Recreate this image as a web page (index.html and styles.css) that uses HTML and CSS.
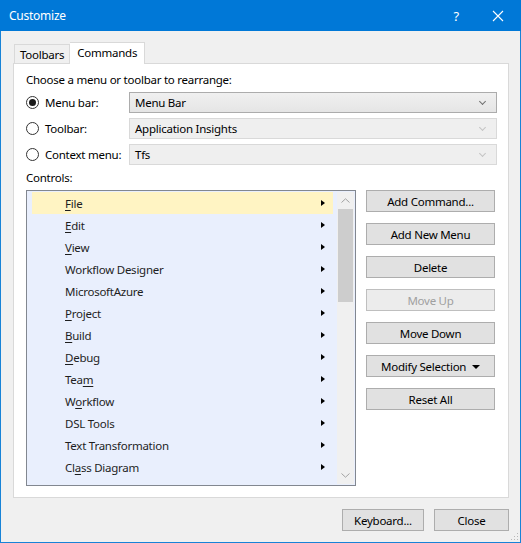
FILE: index.html
```html
<!DOCTYPE html>
<html lang="en">
<head>
  <meta charset="UTF-8">
  <title>Customize</title>
  <link rel="stylesheet" href="styles.css">
</head>
<body>
  <div class="window">
    <div class="titlebar">
      <span class="title">Customize</span>
      <span class="help">?</span>
      <svg class="close-x" width="12" height="12" viewBox="0 0 12 12">
        <path d="M1 1 L11 11 M11 1 L1 11" stroke="#fff" stroke-width="1.1"/>
      </svg>
    </div>

    <div class="content">
      <div class="tabs">
        <div class="tab">Toolbars</div>
        <div class="tab active">Commands</div>
      </div>

      <div class="panel">
        <div class="label">Choose a menu or toolbar to rearrange:</div>

        <div class="choice">
          <span class="radio checked"></span>
          <span class="choice-label">Menu bar:</span>
          <div class="combo">Menu Bar<span class="chev"></span></div>
        </div>
        <div class="choice">
          <span class="radio"></span>
          <span class="choice-label">Toolbar:</span>
          <div class="combo disabled">Application Insights<span class="chev"></span></div>
        </div>
        <div class="choice">
          <span class="radio"></span>
          <span class="choice-label">Context menu:</span>
          <div class="combo disabled">Tfs<span class="chev"></span></div>
        </div>

        <div class="label controls">Controls:</div>

        <div class="controls-row">
          <div class="listbox">
            <div class="items">
              <div class="item selected"><span><u>F</u>ile</span><i class="arrow"></i></div>
              <div class="item"><span><u>E</u>dit</span><i class="arrow"></i></div>
              <div class="item"><span><u>V</u>iew</span><i class="arrow"></i></div>
              <div class="item"><span>Workflow Designer</span><i class="arrow"></i></div>
              <div class="item"><span>MicrosoftAzure</span><i class="arrow"></i></div>
              <div class="item"><span><u>P</u>roject</span><i class="arrow"></i></div>
              <div class="item"><span><u>B</u>uild</span><i class="arrow"></i></div>
              <div class="item"><span><u>D</u>ebug</span><i class="arrow"></i></div>
              <div class="item"><span>Tea<u>m</u></span><i class="arrow"></i></div>
              <div class="item"><span>W<u>o</u>rkflow</span><i class="arrow"></i></div>
              <div class="item"><span>DSL Tools</span><i class="arrow"></i></div>
              <div class="item"><span>Text Transformation</span><i class="arrow"></i></div>
              <div class="item"><span>Cl<u>a</u>ss Diagram</span><i class="arrow"></i></div>
            </div>
            <div class="scrollbar">
              <div class="sb-btn"><svg width="9" height="5" viewBox="0 0 9 5"><path d="M0.5 4.5 L4.5 0.8 L8.5 4.5" fill="none" stroke="#a3a3a3"/></svg></div>
              <div class="sb-track"><div class="sb-thumb"></div></div>
              <div class="sb-btn"><svg width="9" height="5" viewBox="0 0 9 5"><path d="M0.5 0.5 L4.5 4.2 L8.5 0.5" fill="none" stroke="#a3a3a3"/></svg></div>
            </div>
          </div>

          <div class="actions">
            <button class="btn">Add Command...</button>
            <button class="btn">Add New Menu</button>
            <button class="btn">Delete</button>
            <button class="btn" disabled>Move Up</button>
            <button class="btn">Move Down</button>
            <button class="btn">Modify Selection <i class="drop"></i></button>
            <button class="btn">Reset All</button>
          </div>
        </div>
      </div>

      <div class="footer">
        <button class="btn keyboard">Keyboard...</button>
        <button class="btn close">Close</button>
      </div>
    </div>

    <svg class="grip" width="9" height="9" viewBox="0 0 9 9">
      <g fill="#b8b8b8">
        <rect x="7" y="1" width="1" height="1"/>
        <rect x="4" y="4" width="1" height="1"/><rect x="7" y="4" width="1" height="1"/>
        <rect x="1" y="7" width="1" height="1"/><rect x="4" y="7" width="1" height="1"/><rect x="7" y="7" width="1" height="1"/>
      </g>
    </svg>
  </div>
</body>
</html>
```

FILE: styles.css
```css
body {
  margin: 0;
  font-family: "Noto Sans", "Open Sans", sans-serif;
  font-size: 11.5px;
  letter-spacing: -0.25px;
  color: #000;
}
.window {
  position: relative;
  width: 521px;
  height: 543px;
  box-sizing: border-box;
  background-color: #f0f0f0;
  border: 1px solid #1883d7;
  border-top: none;
}
.titlebar {
  height: 31px;
  margin: 0 -1px;
  background-color: #0078d7;
  color: #fff;
  display: flex;
  align-items: center;
  padding-left: 9px;
}
.title {
  flex: 1;
  font-size: 12px;
}
.help {
  font-size: 13px;
  margin-right: 33px;
}
.close-x {
  margin-right: 17px;
}
.content {
  padding: 11px 11px 0 12px;
}
.tabs {
  display: flex;
  align-items: flex-end;
  height: 21px;
  margin-left: 1px;
  position: relative;
  z-index: 1;
}
.tab {
  height: 19px;
  box-sizing: border-box;
  padding: 1px 5px 0 5px;
  border: 1px solid #d9d9d9;
  border-bottom: none;
  background-color: #f0f0f0;
  line-height: 17px;
}
.tab.active {
  height: 22px;
  margin-bottom: -1px;
  background-color: #fff;
  padding: 0 7px;
  line-height: 20px;
  border-left: none;
}
.panel {
  height: 435px;
  box-sizing: border-box;
  border: 1px solid #d9d9d9;
  background-color: #fff;
  padding: 8px 11px 0 12px;
}
.label {
  height: 16px;
  line-height: 16px;
}
.choice {
  display: flex;
  align-items: center;
  height: 21px;
  margin-top: 4px;
}
.choice + .choice {
  margin-top: 5px;
}
.radio {
  width: 13px;
  height: 13px;
  box-sizing: border-box;
  border: 1px solid #333;
  border-radius: 50%;
  margin: 0 6px 0 0;
  display: flex;
  align-items: center;
  justify-content: center;
}
.radio.checked::after {
  content: "";
  width: 7px;
  height: 7px;
  border-radius: 50%;
  background-color: #1a1a1a;
}
.choice-label {
  width: 84px;
}
.combo {
  flex: 1;
  height: 21px;
  box-sizing: border-box;
  border: 1px solid #acacac;
  background: linear-gradient(#f0f0f0, #e5e5e5);
  padding-left: 5px;
  line-height: 19px;
  display: flex;
  justify-content: space-between;
}
.combo.disabled {
  border-color: #d9d9d9;
  background: #efefef;
}
.chev {
  width: 4px;
  height: 4px;
  border-right: 1px solid #707070;
  border-bottom: 1px solid #707070;
  transform: rotate(45deg);
  margin: 6px 11px 0 0;
}
.combo.disabled .chev {
  border-color: #c4c4c4;
}
.controls {
  margin-top: 5px;
}
.controls-row {
  display: flex;
  margin-top: 4px;
}
.listbox {
  width: 330px;
  height: 296px;
  box-sizing: border-box;
  border: 1px solid #828790;
  background-color: #e9effd;
  display: flex;
  padding: 1px 1px 1px 0;
}
.items {
  flex: 1;
  padding-left: 5px;
}
.item {
  height: 22px;
  display: flex;
  align-items: center;
  justify-content: space-between;
  padding: 0 8px 0 33px;
  margin-right: 4px;
  color: #1e1e1e;
}
.item.selected {
  background-color: #fff4c3;
}
.item u {
  text-decoration-thickness: 1px;
  text-underline-offset: 2px;
}
.arrow {
  width: 0;
  height: 0;
  border-left: 4px solid #000;
  border-top: 3.5px solid transparent;
  border-bottom: 3.5px solid transparent;
}
.scrollbar {
  width: 17px;
  display: flex;
  flex-direction: column;
  background-color: #f0f0f0;
}
.sb-btn {
  height: 17px;
  display: flex;
  align-items: center;
  justify-content: center;
}
.sb-track {
  flex: 1;
}
.sb-thumb {
  height: 93px;
  margin: 0 1px;
  background-color: #cdcdcd;
}
.actions {
  display: flex;
  flex-direction: column;
  gap: 11px;
  margin-left: 10px;
}
.btn {
  font-family: inherit;
  font-size: 11.5px;
  letter-spacing: -0.25px;
  color: #000;
  height: 22px;
  width: 129px;
  padding: 0;
  border: 1px solid #adadad;
  background-color: #e1e1e1;
}
.btn:disabled {
  color: #a0a0a0;
  border-color: #bfbfbf;
  background-color: #ececec;
}
.drop {
  display: inline-block;
  width: 0;
  height: 0;
  border-top: 4px solid #000;
  border-left: 4px solid transparent;
  border-right: 4px solid transparent;
  vertical-align: 2px;
  margin-left: 3px;
}
.footer {
  display: flex;
  justify-content: flex-end;
  gap: 10px;
  margin-top: 11px;
}
.keyboard {
  width: 82px;
}
.close {
  width: 75px;
}
.grip {
  position: absolute;
  right: 1px;
  bottom: 1px;
}
```
